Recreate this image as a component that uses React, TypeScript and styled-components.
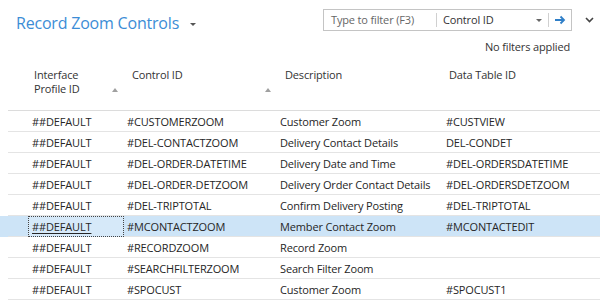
import React from "react";
import styled, { createGlobalStyle } from "styled-components";

const Global = createGlobalStyle`
  html, body { margin: 0; padding: 0; background: #fff; }
  body { font-family: "Open Sans", "Noto Sans", sans-serif; color: #262626; }
`;

const Page = styled.div`
  width: 600px;
  height: 300px;
  overflow: hidden;
  display: flex;
  flex-direction: column;
`;

const TopBar = styled.div`
  display: flex;
  align-items: flex-start;
  height: 40px;
`;

const TitleWrap = styled.div`
  display: flex;
  align-items: center;
  padding: 12px 0 0 16px;
  gap: 11px;
`;

const Title = styled.h1`
  margin: 0;
  font-size: 16px;
  font-weight: 400;
  color: #3c8dd6;
  line-height: 22px;
  letter-spacing: -0.2px;
`;

const Caret = styled.span`
  width: 0;
  height: 0;
  border-left: 3px solid transparent;
  border-right: 3px solid transparent;
  border-top: 3px solid #555;
  margin-top: 2px;
`;

const FilterArea = styled.div`
  margin-left: auto;
  display: flex;
  align-items: center;
  padding-top: 9px;
  padding-right: 6px;
  gap: 12px;
`;

const FilterBox = styled.div`
  width: 249px;
  height: 22px;
  border: 1px solid #c4c4c4;
  display: flex;
  align-items: center;
  box-sizing: border-box;
  font-size: 11px;
  letter-spacing: -0.15px;
  color: #555;
`;

const FilterInput = styled.div`
  width: 113px;
  padding-left: 7px;
  box-sizing: border-box;
  border-right: 1px solid #d0d0d0;
  height: 14px;
  line-height: 14px;
  color: #666;
`;

const FilterField = styled.div`
  flex: 1;
  display: flex;
  align-items: center;
  padding-left: 6px;
  color: #333;
  height: 14px;
  line-height: 14px;
`;

const FieldCaret = styled.span`
  margin-left: auto;
  margin-right: 6px;
  width: 0;
  height: 0;
  border-left: 3px solid transparent;
  border-right: 3px solid transparent;
  border-top: 3px solid #666;
`;

const GoButton = styled.div`
  width: 22px;
  height: 14px;
  border-left: 1px solid #d0d0d0;
  display: flex;
  align-items: center;
  justify-content: center;
`;

const ChevronBtn = styled.div`
  width: 10px;
  display: flex;
  align-items: center;
  justify-content: center;
`;

const SubBar = styled.div`
  display: flex;
  justify-content: flex-end;
  padding-right: 30px;
  font-size: 11px;
  letter-spacing: -0.15px;
  color: #333;
  height: 16px;
  line-height: 16px;
  margin-top: -1px;
`;

const Grid = styled.div`
  margin-top: 13px;
  display: flex;
  flex-direction: column;
`;

const cols = "22px 95px 153px 166px 1fr";

const HeaderRow = styled.div`
  display: grid;
  grid-template-columns: ${cols};
  height: 42px;
  margin-left: 8px;
  border-bottom: 1px solid #dcdcdc;
  font-size: 11px;
  letter-spacing: -0.15px;
  color: #333;
  line-height: 14px;
`;

const HeaderCell = styled.div<{ $pad?: number }>`
  position: relative;
  padding-left: ${(p) => p.$pad ?? 4}px;
  padding-top: 0;
`;

const SortArrow = styled.span`
  position: absolute;
  right: 7px;
  top: 20px;
  width: 0;
  height: 0;
  border-left: 3.5px solid transparent;
  border-right: 3.5px solid transparent;
  border-bottom: 4px solid #a0a0a0;
`;

const Row = styled.div<{ $selected?: boolean }>`
  display: grid;
  grid-template-columns: ${cols};
  height: 20px;
  margin-left: 8px;
  border-bottom: 1px solid #e4e4e4;
  font-size: 11px;
  letter-spacing: -0.15px;
  color: #262626;
  line-height: 21px;
  background: ${(p) => (p.$selected ? "#cde4f7" : "transparent")};
  box-shadow: ${(p) => (p.$selected ? "-8px 0 0 #cde4f7" : "none")};
  white-space: nowrap;
`;

const Cell = styled.div<{ $focus?: boolean }>`
  padding-left: 2px;
  ${(p) =>
    p.$focus
      ? `
    outline: 1px dotted #444;
    outline-offset: -1px;
    margin-left: -2px;
    padding-left: 4px;
    margin-right: 1px;
    text-decoration: underline;
    text-underline-offset: 2px;
    background: #d6e9f9;
  `
      : ""}
`;

const rows = [
  ["##DEFAULT", "#CUSTOMERZOOM", "Customer Zoom", "#CUSTVIEW"],
  ["##DEFAULT", "#DEL-CONTACTZOOM", "Delivery Contact Details", "DEL-CONDET"],
  ["##DEFAULT", "#DEL-ORDER-DATETIME", "Delivery Date and Time", "#DEL-ORDERSDATETIME"],
  ["##DEFAULT", "#DEL-ORDER-DETZOOM", "Delivery Order Contact Details", "#DEL-ORDERSDETZOOM"],
  ["##DEFAULT", "#DEL-TRIPTOTAL", "Confirm Delivery Posting", "#DEL-TRIPTOTAL"],
  ["##DEFAULT", "#MCONTACTZOOM", "Member Contact Zoom", "#MCONTACTEDIT"],
  ["##DEFAULT", "#RECORDZOOM", "Record Zoom", ""],
  ["##DEFAULT", "#SEARCHFILTERZOOM", "Search Filter Zoom", ""],
  ["##DEFAULT", "#SPOCUST", "Customer Zoom", "#SPOCUST1"],
];

export default function App() {
  return (
    <Page>
      <Global />
      <TopBar>
        <TitleWrap>
          <Title>Record Zoom Controls</Title>
          <Caret />
        </TitleWrap>
        <FilterArea>
          <FilterBox>
            <FilterInput>Type to filter (F3)</FilterInput>
            <FilterField>
              Control ID
              <FieldCaret />
            </FilterField>
            <GoButton>
              <svg width="12" height="10" viewBox="0 0 12 10">
                <path d="M1 5H10M6.5 1.5L10 5L6.5 8.5" fill="none" stroke="#2f7fc8" strokeWidth="1.8" />
              </svg>
            </GoButton>
          </FilterBox>
          <ChevronBtn>
            <svg width="9" height="6" viewBox="0 0 9 6">
              <path d="M1 1L4.5 4.5L8 1" fill="none" stroke="#444" strokeWidth="1.6" />
            </svg>
          </ChevronBtn>
        </FilterArea>
      </TopBar>
      <SubBar>No filters applied</SubBar>
      <Grid>
        <HeaderRow>
          <div />
          <HeaderCell $pad={4}>
            Interface
            <br />
            Profile ID
            <SortArrow />
          </HeaderCell>
          <HeaderCell $pad={7}>
            Control ID
            <SortArrow />
          </HeaderCell>
          <HeaderCell $pad={7}>Description</HeaderCell>
          <HeaderCell $pad={5}>Data Table ID</HeaderCell>
        </HeaderRow>
        {rows.map((r, i) => (
          <Row key={i} $selected={i === 5}>
            <div />
            <Cell $focus={i === 5}>{r[0]}</Cell>
            <Cell>{r[1]}</Cell>
            <Cell>{r[2]}</Cell>
            <Cell>{r[3]}</Cell>
          </Row>
        ))}
      </Grid>
    </Page>
  );
}
